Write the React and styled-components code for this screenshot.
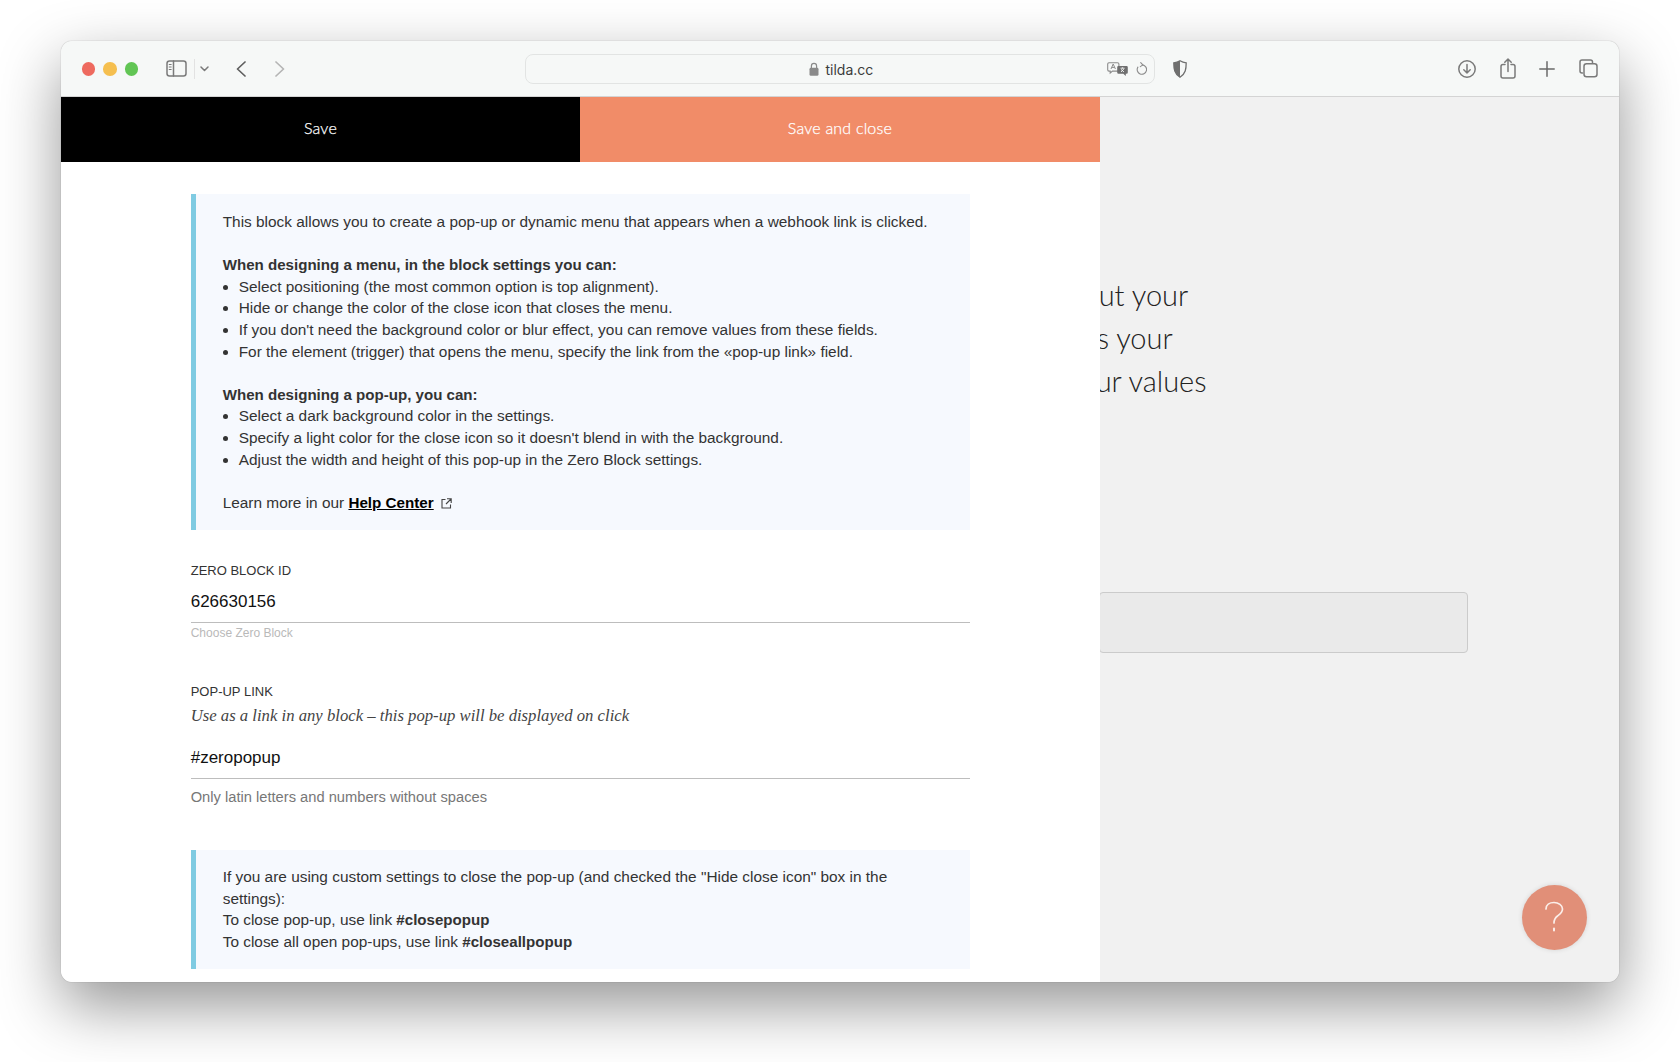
import React from 'react'
import styled, { createGlobalStyle } from 'styled-components'

const Global = createGlobalStyle`
  html, body { margin: 0; padding: 0; background: #fff; }
  body { font-family: "Liberation Sans", Arial, sans-serif; }
  * { box-sizing: border-box; }
`

const Page = styled.div`
  width: 1680px;
  height: 1062px;
  padding: 40.7px 0 0 60.7px;
  overflow: hidden;
`

const Win = styled.div`
  width: 1558.6px;
  height: 941px;
  border-radius: 11px;
  overflow: hidden;
  position: relative;
  display: flex;
  flex-direction: column;
  background: #f1f1f1;
  box-shadow: 0 24px 62px rgba(0, 0, 0, 0.42), 0 0 1px rgba(0, 0, 0, 0.45);
`

const Toolbar = styled.header`
  height: 56.6px;
  flex: none;
  display: flex;
  align-items: center;
  padding: 1px 21px 0;
  background: #f6f8f7;
  border-bottom: 1px solid #d4d4d4;
`

const Lights = styled.div`
  display: flex;
  gap: 8px;
`

const Light = styled.span`
  width: 13.6px;
  height: 13.6px;
  border-radius: 50%;
  background: ${p => p.$color};
`

const Slot = styled.span`
  display: flex;
  flex: none;
  margin-left: ${p => p.$ml}px;
  color: ${p => p.$color || '#7a7a7a'};
`

const Sep = styled.span`
  width: 1px;
  height: 20px;
  flex: none;
  margin-left: 7px;
  background: #e2e2e2;
`

const UrlBar = styled.div`
  width: 630px;
  height: 30px;
  flex: none;
  margin-left: 240px;
  border: 1px solid #e2e4e3;
  border-radius: 8px;
  display: flex;
  align-items: center;
  position: relative;
  padding-left: 283px;
  font-family: Inter, "Liberation Sans", sans-serif;
  font-size: 14px;
  color: #3c3c3c;
`

const UrlText = styled.span`
  margin-left: 6px;
  padding-top: 1px;
`

const UrlTools = styled.div`
  display: flex;
  align-items: center;
  margin-left: auto;
  padding-right: 7px;
  gap: 8px;
  color: #8c8c8c;
`

const Main = styled.div`
  flex: 1;
  min-height: 0;
  display: flex;
`

const Panel = styled.section`
  width: 1039px;
  flex: none;
  background: #fff;
  display: flex;
  flex-direction: column;
  position: relative;
  z-index: 1;
`

const ButtonBar = styled.div`
  height: 65px;
  flex: none;
  display: grid;
  grid-template-columns: 1fr 1fr;
`

const BarButton = styled.div`
  display: flex;
  align-items: center;
  justify-content: center;
  padding-bottom: 4px;
  background: ${p => (p.$accent ? '#f18c68' : '#000')};
  color: #fff;
  font-family: Lato, sans-serif;
  font-weight: 300;
  font-size: 16px;
  letter-spacing: 0.2px;
  -webkit-text-stroke: 0.25px #fff;
`

const Content = styled.div`
  padding: 32px 130px 0;
`

const Note = styled.div`
  background: #f6f9fe;
  border-left: 5px solid #7fcbe2;
  padding: ${p => p.$py}px 30px ${p => p.$py}px 27px;
  font-size: 15.4px;
  line-height: 21.6px;
  color: #333;
  margin-top: ${p => p.$mt || 0}px;
`

const Para = styled.div`
  margin-bottom: ${p => (p.$gap ? '21.6px' : 0)};
`

const Bold = styled.strong`
  font-size: 15.1px;
`

const Bullets = styled.ul`
  margin: 0 0 21.6px;
  padding: 0 0 0 16px;
`

const HelpLink = styled.a`
  color: #000;
  font-size: 15.2px;
  font-weight: 700;
  text-decoration: underline;
`

const ExtIcon = styled.svg`
  margin-left: 7px;
  vertical-align: -1px;
`

const Label = styled.div`
  margin-top: ${p => p.$mt}px;
  font-size: 13px;
  line-height: 16px;
  color: #333;
`

const Lead = styled.div`
  margin-top: 5px;
  font-family: "Liberation Serif", serif;
  font-style: italic;
  font-size: 16.7px;
  line-height: 22px;
  color: #444;
`

const Value = styled.div`
  margin-top: ${p => p.$mt}px;
  font-size: 17px;
  line-height: 24px;
  color: #111;
  padding-bottom: ${p => p.$pb}px;
  border-bottom: 1px solid #bdbdbd;
`

const Hint = styled.div`
  margin-top: ${p => p.$mt}px;
  font-size: ${p => p.$size}px;
  line-height: ${p => p.$lh}px;
  color: ${p => p.$color};
`

const Side = styled.aside`
  flex: 1;
  min-width: 0;
  overflow: hidden;
  background: #f1f1f1;
  padding-top: 176px;
`

const SideLine = styled.div`
  margin-left: ${p => p.$ml}px;
  font-family: Lato, sans-serif;
  font-weight: 300;
  font-size: 29px;
  line-height: 43px;
  color: #222;
  white-space: nowrap;
`

const SideInput = styled.div`
  width: 369px;
  height: 61.5px;
  margin: 189.5px 0 0 -1px;
  border: 1px solid #cbcbcb;
  border-radius: 4px;
  background: #eaeaea;
`

const HelpFab = styled.div`
  position: absolute;
  left: 1461px;
  top: 844px;
  width: 65px;
  height: 65px;
  border-radius: 50%;
  background: #e18f78;
  box-shadow: 0 0 5px rgba(0, 0, 0, 0.12);
  display: flex;
  align-items: center;
  justify-content: center;
  z-index: 2;
`

function Icon({ w, h, children, fill = 'none', sw = 1.5 }) {
  return (
    <svg width={w} height={h} viewBox={`0 0 ${w} ${h}`} fill={fill} stroke="currentColor" strokeWidth={sw} strokeLinecap="round" strokeLinejoin="round">
      {children}
    </svg>
  )
}

export default function App() {
  return (
    <Page>
      <Global />
      <Win>
        <Toolbar>
          <Lights>
            <Light $color="#ee6a5f" />
            <Light $color="#f5bf4f" />
            <Light $color="#61c554" />
          </Lights>
          <Slot $ml={28}>
            <Icon w={21} h={17}>
              <rect x="1" y="1" width="19" height="15" rx="2.5" />
              <path d="M7.5 1v15" />
              <path d="M3.2 4.5h2M3.2 7h2M3.2 9.5h2" strokeWidth="1" />
            </Icon>
          </Slot>
          <Sep />
          <Slot $ml={5}>
            <Icon w={9} h={6}>
              <path d="M1 1l3.5 3.5L8 1" />
            </Icon>
          </Slot>
          <Slot $ml={27} $color="#5f5f5f">
            <Icon w={10} h={16} sw={1.7}>
              <path d="M9 1L1.5 8 9 15" />
            </Icon>
          </Slot>
          <Slot $ml={29} $color="#b5b5b5">
            <Icon w={10} h={16} sw={1.7}>
              <path d="M1 1l7.5 7L1 15" />
            </Icon>
          </Slot>
          <UrlBar>
            <svg width="10" height="14" viewBox="0 0 10 14">
              <path d="M2.4 6V4a2.6 2.6 0 0 1 5.2 0v2" fill="none" stroke="#8a8a8a" strokeWidth="1.2" />
              <rect x="0.5" y="5.8" width="9" height="8" rx="1.4" fill="#8a8a8a" />
            </svg>
            <UrlText>tilda.cc</UrlText>
            <UrlTools>
              <svg width="21" height="14" viewBox="0 0 21 14">
                <path d="M2 .7h8.5a1.4 1.4 0 0 1 1.4 1.4v5.6a1.4 1.4 0 0 1-1.4 1.4H5.5L3.2 11V9.1H2A1.4 1.4 0 0 1 .7 7.700V2.100A1.4 1.400 0 0 1 2 .7z" fill="none" stroke="#8c8c8c" strokeWidth="1.1" />
                <path d="M4 7l2.200-5 2.200 5M4.800 5.400h2.800" fill="none" stroke="#8c8c8c" strokeWidth="1" />
                <path d="M11.500 4h8a1.300 1.300 0 0 1 1.300 1.300v5.200a1.300 1.300 0 0 1-1.300 1.300h-.7V14l-2.500-2.200h-4.800a1.300 1.300 0 0 1-1.300-1.300V5.300A1.300 1.300 0 0 1 11.500 4z" fill="#6f6f6f" />
                <path d="M13.500 6.200h4M15.500 5.400v1M14 10l3-3.200M14 7.300l3 2.700" fill="none" stroke="#f6f8f7" strokeWidth=".9" />
              </svg>
              <Icon w={11} h={14} sw={1.1}>
                <path d="M6.300 2.900a4.700 4.700 0 1 1-4.400 2.200" />
                <path d="M4.700 .6l2.200 2.300-2.600 1.700" />
              </Icon>
            </UrlTools>
          </UrlBar>
          <Slot $ml={18} $color="#6f6f6f">
            <svg width="14" height="18" viewBox="0 0 14 18">
              <path d="M7 .8c2 1.200 4 1.800 6.200 2 0 6-.6 11-6.200 14.400C1.400 13.800.8 8.800.8 2.800 3 2.600 5 2 7 .8z" fill="none" stroke="currentColor" strokeWidth="1.300" />
              <path d="M7 .8v16.400C1.400 13.800.8 8.800.8 2.800 3 2.600 5 2 7 .8z" fill="currentColor" />
            </svg>
          </Slot>
          <Slot $ml={271}>
            <Icon w={18} h={18}>
              <circle cx="9" cy="9" r="8.200" />
              <path d="M9 4.500v8.500M5.800 9.800L9 13l3.200-3.200" />
            </Icon>
          </Slot>
          <Slot $ml={24}>
            <Icon w={16} h={21}>
              <path d="M5 6.500H3a2 2 0 0 0-2 2V18a2 2 0 0 0 2 2h10a2 2 0 0 0 2-2V8.500a2 2 0 0 0-2-2h-2" />
              <path d="M8 13.500V1.200M4.800 4.200L8 1l3.200 3.200" />
            </Icon>
          </Slot>
          <Slot $ml={23} $color="#6a6a6a">
            <Icon w={16} h={16}>
              <path d="M8 .8v14.400M.8 8h14.400" />
            </Icon>
          </Slot>
          <Slot $ml={24}>
            <Icon w={19} h={19}>
              <path d="M3.500 14H3a2 2 0 0 1-2-2V3a2 2 0 0 1 2-2h8.500a2 2 0 0 1 2 2v.800" />
              <rect x="5" y="4.800" width="13" height="13" rx="2.500" />
            </Icon>
          </Slot>
        </Toolbar>
        <Main>
          <Panel>
            <ButtonBar>
              <BarButton>Save</BarButton>
              <BarButton $accent>Save and close</BarButton>
            </ButtonBar>
            <Content>
              <Note $py={16.7}>
                <Para $gap>This block allows you to create a pop-up or dynamic menu that appears when a webhook link is clicked.</Para>
                <Bold>When designing a menu, in the block settings you can:</Bold>
                <Bullets>
                  <li>Select positioning (the most common option is top alignment).</li>
                  <li>Hide or change the color of the close icon that closes the menu.</li>
                  <li>If you don't need the background color or blur effect, you can remove values from these fields.</li>
                  <li>For the element (trigger) that opens the menu, specify the link from the «pop-up link» field.</li>
                </Bullets>
                <Bold>When designing a pop-up, you can:</Bold>
                <Bullets>
                  <li>Select a dark background color in the settings.</li>
                  <li>Specify a light color for the close icon so it doesn't blend in with the background.</li>
                  <li>Adjust the width and height of this pop-up in the Zero Block settings.</li>
                </Bullets>
                Learn more in our <HelpLink href="#help">Help Center</HelpLink>
                <ExtIcon width="11" height="11" viewBox="0 0 11 11" fill="none" stroke="#444" strokeWidth="1.100">
                  <path d="M4.500 1.500H1v8.500h8.500V6.500M6 .8h4.200V5M10 1L5 6" />
                </ExtIcon>
              </Note>

              <Label $mt={33}>ZERO BLOCK ID</Label>
              <Value $mt={11} $pb={8}>626630156</Value>
              <Hint $mt={2} $size={12} $lh={16} $color="#b9b9b9">Choose Zero Block</Hint>

              <Label $mt={43}>POP-UP LINK</Label>
              <Lead>Use as a link in any block – this pop-up will be displayed on click</Lead>
              <Value $mt={19} $pb={8}>#zeropopup</Value>
              <Hint $mt={8} $size={14.7} $lh={20} $color="#777">Only latin letters and numbers without spaces</Hint>

              <Note $mt={43} $py={16.1}>
                If you are using custom settings to close the pop-up (and checked the "Hide close icon" box in the settings):
                <br />
                To close pop-up, use link <Bold>#closepopup</Bold>
                <br />
                To close all open pop-ups, use link <Bold>#closeallpopup</Bold>
              </Note>
            </Content>
          </Panel>
          <Side>
            <SideLine $ml={-1}>ut your</SideLine>
            <SideLine $ml={-3}>s your</SideLine>
            <SideLine $ml={-4}>ur values</SideLine>
            <SideInput />
          </Side>
        </Main>
        <HelpFab>
          <svg width="20" height="32" viewBox="0 0 20 32" fill="none" stroke="#fbeee9" strokeWidth="1.700" strokeLinecap="round">
            <path d="M2 8c0-4 3.500-6.500 8-6.500S18.500 4.200 18.500 8c0 3.500-2.600 5.200-5 7-2.200 1.700-3.500 3.500-3.500 7" />
            <path d="M10 27.500v2" strokeWidth="2" />
          </svg>
        </HelpFab>
      </Win>
    </Page>
  )
}
